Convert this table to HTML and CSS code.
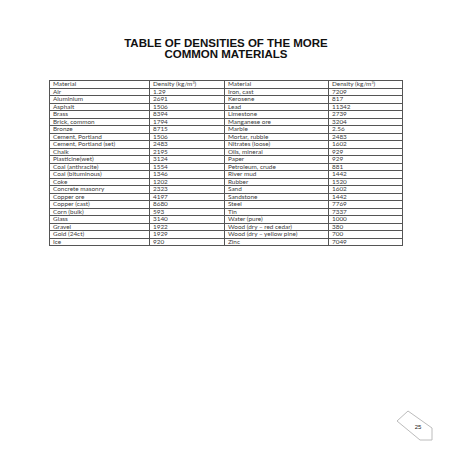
FILE: index.html
```html
<!DOCTYPE html>
<html>
<head>
<meta charset="utf-8">
<link rel="stylesheet" href="styles.css">
</head>
<body>
<div class="page">
  <h1 class="title">TABLE OF DENSITIES OF THE MORE<br>COMMON MATERIALS</h1>
  <table class="dens">
    <colgroup><col class="c1"><col class="c2"><col class="c3"><col class="c4"></colgroup>
    <tr><td>Material</td><td>Density (kg/m<sup>3</sup>)</td><td>Material</td><td>Density (kg/m<sup>3</sup>)</td></tr>
    <tr><td>Air</td><td>1.29</td><td>Iron, cast</td><td>7209</td></tr>
    <tr><td>Aluminium</td><td>2691</td><td>Kerosene</td><td>817</td></tr>
    <tr><td>Asphalt</td><td>1506</td><td>Lead</td><td>11342</td></tr>
    <tr><td>Brass</td><td>8394</td><td>Limestone</td><td>2739</td></tr>
    <tr><td>Brick, common</td><td>1794</td><td>Manganese ore</td><td>3204</td></tr>
    <tr><td>Bronze</td><td>8715</td><td>Marble</td><td>2.56</td></tr>
    <tr><td>Cement, Portland</td><td>1506</td><td>Mortar, rubble</td><td>2483</td></tr>
    <tr><td>Cement, Portland (set)</td><td>2483</td><td>Nitrates (loose)</td><td>1602</td></tr>
    <tr><td>Chalk</td><td>2195</td><td>Oils, mineral</td><td>929</td></tr>
    <tr><td>Plasticine(wet)</td><td>3124</td><td>Paper</td><td>929</td></tr>
    <tr><td>Coal (anthracite)</td><td>1554</td><td>Petroleum, crude</td><td>881</td></tr>
    <tr><td>Coal (bituminous)</td><td>1346</td><td>River mud</td><td>1442</td></tr>
    <tr><td>Coke</td><td>1202</td><td>Rubber</td><td>1520</td></tr>
    <tr><td>Concrete masonry</td><td>2323</td><td>Sand</td><td>1602</td></tr>
    <tr><td>Copper ore</td><td>4197</td><td>Sandstone</td><td>1442</td></tr>
    <tr><td>Copper (cast)</td><td>8680</td><td>Steel</td><td>7769</td></tr>
    <tr><td>Corn (bulk)</td><td>593</td><td>Tin</td><td>7337</td></tr>
    <tr><td>Glass</td><td>3140</td><td>Water (pure)</td><td>1000</td></tr>
    <tr><td>Gravel</td><td>1922</td><td>Wood (dry – red cedar)</td><td>380</td></tr>
    <tr><td>Gold (24ct)</td><td>1929</td><td>Wood (dry – yellow pine)</td><td>700</td></tr>
    <tr><td>Ice</td><td>920</td><td>Zinc</td><td>7049</td></tr>
  </table>
  <div class="pagenum">
    <svg width="40" height="34" viewBox="0 0 40 34">
      <polygon points="2,13 13,3 37,20 37,32 25,32" fill="#fff" stroke="#bcbcbc" stroke-width="1"/>
      <text x="23" y="21" text-anchor="middle" class="pn">25</text>
    </svg>
  </div>
</div>
</body>
</html>
```

FILE: styles.css
```css
html, body {
  margin: 0;
  padding: 0;
  background: #fff;
}
.page {
  width: 452px;
  height: 452px;
  display: flex;
  flex-direction: column;
  align-items: center;
  font-family: "Liberation Sans", Arial, sans-serif;
}
.title {
  margin: 38px 0 0 0;
  font-size: 11.5px;
  line-height: 11px;
  font-weight: bold;
  text-align: center;
  color: #111;
}
.dens {
  margin-top: 20px;
  width: 353px;
  border-collapse: collapse;
  table-layout: fixed;
  font-family: Lato, "Open Sans", sans-serif;
  font-size: 6.4px;
  color: #404040;
}
.c1 { width: 100px; }
.c2 { width: 75px; }
.c3 { width: 104px; }
.c4 { width: 74px; }
.dens td {
  border: 1px solid #555;
  height: 5.5px;
  padding: 0 3px 1px 3px;
  line-height: 5.5px;
  white-space: nowrap;
  overflow: hidden;
  vertical-align: middle;
}
.dens sup {
  font-size: 3.6px;
  line-height: 0;
  vertical-align: 2px;
}
.pagenum {
  margin-top: auto;
  align-self: flex-end;
  margin-right: 17px;
  margin-bottom: 10px;
  display: flex;
}
.pn {
  font-family: "Liberation Sans", Arial, sans-serif;
  font-size: 6px;
  fill: #222;
}
```
